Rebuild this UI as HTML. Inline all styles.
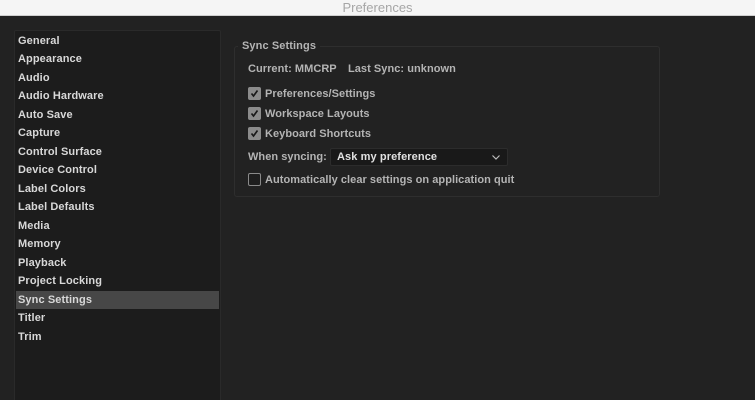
<!DOCTYPE html>
<html><head><meta charset="utf-8"><style>
*{margin:0;padding:0;box-sizing:border-box}
body{width:755px;height:400px;overflow:hidden;background:#222;font-family:"Liberation Sans",sans-serif;position:relative}
.tb{position:absolute;left:0;top:0;width:755px;height:16px;background:#f5f5f5;border-bottom:1px solid #cfcfcf;text-align:center;color:#a6a6a6;font-size:13px;line-height:16px}
.side{position:absolute;left:14px;top:30px;width:207px;height:370px;background:#1c1c1c;border:1px solid #2a2a2a;border-bottom:none;border-radius:2px 2px 0 0}
.it{position:absolute;left:0;width:205px;height:18px;padding-left:3px;color:#d8d8d8;font-size:11px;letter-spacing:.1px;line-height:18px;font-weight:bold}
.sel{background:#474747;left:1px;width:203px;padding-left:2px}
.grp{position:absolute;left:234px;top:46px;width:426px;height:151px;border:1px solid #2e2e2e;border-radius:3px}
.leg{position:absolute;left:238px;top:40px;background:#222;padding:0 4px;color:#b4b4b4;font-size:11px;letter-spacing:.1px;font-weight:bold}
.t{position:absolute;color:#b4b4b4;font-size:11px;letter-spacing:.05px;font-weight:bold;line-height:14px;white-space:nowrap}
.cb{position:absolute;left:248px;width:13px;height:13px;border-radius:2px;background:#8c8c8c}
.cb svg{position:absolute;left:1px;top:1px}
.cbe{background:#1e1e1e;border:1px solid #8a8a8a}
.dd{position:absolute;left:330px;top:148px;width:178px;height:18px;background:#191919;border:1px solid #2c2c2c;border-radius:2px;color:#e0e0e0;font-size:11px;font-weight:bold;letter-spacing:.1px;line-height:16px;padding-left:6px}
.dd svg{position:absolute;right:7px;top:6px}
</style></head><body>
<div class="tb">Preferences</div>
<div class="side">
<div class="it" style="top:1px">General</div>
<div class="it" style="top:19px">Appearance</div>
<div class="it" style="top:38px">Audio</div>
<div class="it" style="top:56px">Audio Hardware</div>
<div class="it" style="top:75px">Auto Save</div>
<div class="it" style="top:93px">Capture</div>
<div class="it" style="top:112px">Control Surface</div>
<div class="it" style="top:130px">Device Control</div>
<div class="it" style="top:149px">Label Colors</div>
<div class="it" style="top:167px">Label Defaults</div>
<div class="it" style="top:186px">Media</div>
<div class="it" style="top:204px">Memory</div>
<div class="it" style="top:223px">Playback</div>
<div class="it" style="top:241px">Project Locking</div>
<div class="it sel" style="top:260px">Sync Settings</div>
<div class="it" style="top:278px">Titler</div>
<div class="it" style="top:297px">Trim</div>
</div>
<div class="grp"></div>
<div class="leg">Sync Settings</div>
<div class="t" style="left:248px;top:62px">Current: MMCRP</div>
<div class="t" style="left:348px;top:62px">Last Sync: unknown</div>
<div class="cb" style="top:87px"><svg width="11" height="11"><path d="M2.5 5.5 L4.5 8 L8.5 2.5" stroke="#1a1a1a" stroke-width="1.7" fill="none"/></svg></div>
<div class="t" style="left:265px;top:87px">Preferences/Settings</div>
<div class="cb" style="top:107px"><svg width="11" height="11"><path d="M2.5 5.5 L4.5 8 L8.5 2.5" stroke="#1a1a1a" stroke-width="1.7" fill="none"/></svg></div>
<div class="t" style="left:265px;top:107px">Workspace Layouts</div>
<div class="cb" style="top:127px"><svg width="11" height="11"><path d="M2.5 5.5 L4.5 8 L8.5 2.5" stroke="#1a1a1a" stroke-width="1.7" fill="none"/></svg></div>
<div class="t" style="left:265px;top:127px">Keyboard Shortcuts</div>
<div class="t" style="left:248px;top:150px">When syncing:</div>
<div class="dd">Ask my preference<svg width="8" height="5"><path d="M0.5 0.5 L4 4 L7.5 0.5" stroke="#bbb" stroke-width="1.2" fill="none"/></svg></div>
<div class="cb cbe" style="top:173px"></div>
<div class="t" style="left:265px;top:173px">Automatically clear settings on application quit</div>
</body></html>
